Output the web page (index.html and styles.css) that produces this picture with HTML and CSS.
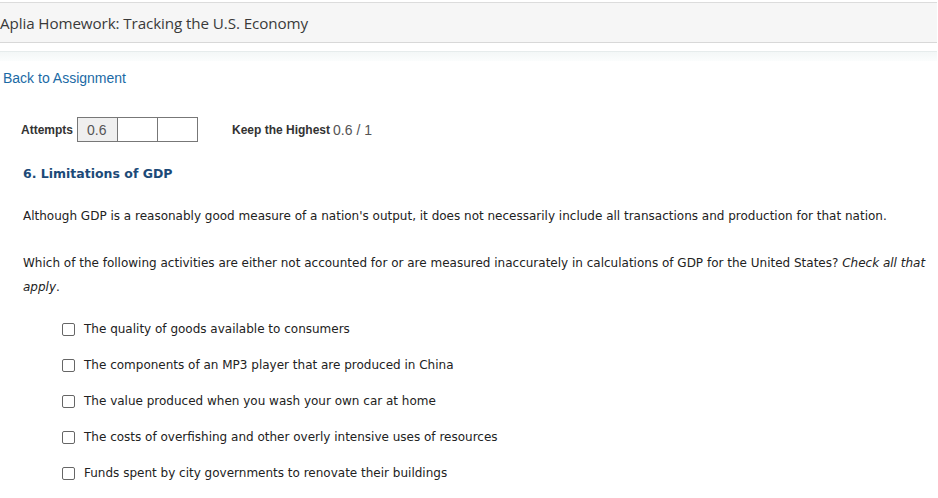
FILE: index.html
```html
<!DOCTYPE html>
<html>
<head>
<meta charset="utf-8">
<link rel="stylesheet" href="styles.css">
</head>
<body>
<div class="page">
  <header class="topbar">
    <h1 class="title">Aplia Homework: Tracking the U.S. Economy</h1>
  </header>
  <div class="subbar"></div>
  <nav class="backnav"><a class="back" href="#">Back to Assignment</a></nav>
  <section class="content">
    <div class="attempts-row">
      <span class="lbl">Attempts</span>
      <div class="boxes">
        <span class="box filled">0.6</span>
        <span class="box"></span>
        <span class="box"></span>
      </div>
      <span class="lbl keep">Keep the Highest</span>
      <span class="score">0.6 / 1</span>
    </div>
    <h2 class="qtitle">6. Limitations of GDP</h2>
    <p class="para">Although GDP is a reasonably good measure of a nation's output, it does not necessarily include all transactions and production for that nation.</p>
    <p class="para question">Which of the following activities are either not accounted for or are measured inaccurately in calculations of GDP for the United States? <em>Check all that</em> <em>apply</em>.</p>
    <ul class="options">
      <li class="opt"><span class="cb"></span><span>The quality of goods available to consumers</span></li>
      <li class="opt"><span class="cb"></span><span>The components of an MP3 player that are produced in China</span></li>
      <li class="opt"><span class="cb"></span><span>The value produced when you wash your own car at home</span></li>
      <li class="opt"><span class="cb"></span><span>The costs of overfishing and other overly intensive uses of resources</span></li>
      <li class="opt"><span class="cb"></span><span>Funds spent by city governments to renovate their buildings</span></li>
    </ul>
  </section>
</div>
</body>
</html>
```
FILE: styles.css
```css
html, body { margin: 0; padding: 0; background: #fff; }
body { width: 938px; height: 498px; overflow: hidden; }
.page { width: 937px; padding-top: 2px; }
.topbar {
  height: 39px;
  background: #f6f6f6;
  border-top: 1px solid #dcdcdc;
  border-bottom: 1px solid #d8d8d8;
  display: flex;
  align-items: center;
}
.title {
  margin: 0;
  font-family: "Open Sans", sans-serif;
  font-weight: 400;
  font-size: 15.2px;
  color: #3a3a3a;
  letter-spacing: -0.1px;
}
.subbar {
  margin-top: 8px;
  height: 9px;
  border-top: 1px solid #e6ecec;
  background: linear-gradient(#f3f7f7, #fbfdfd);
}
.backnav { padding: 8px 0 0 3px; height: 26px; }
.back {
  font-family: "Liberation Sans", Arial, sans-serif;
  font-size: 14px;
  color: #1b6aa5;
  text-decoration: none;
}
.content { padding-left: 21px; }
.attempts-row {
  display: flex;
  align-items: center;
  margin-top: 22px;
  height: 25px;
  font-family: "Liberation Sans", Arial, sans-serif;
}
.lbl { font-size: 12px; font-weight: bold; color: #333; }
.boxes { display: flex; margin-left: 4px; }
.box {
  height: 23px;
  border: 1px solid #777;
  margin-left: -1px;
  font-size: 14px; color: #555;
  display: flex; align-items: center; padding-left: 9px;
  width: 30px;
}
.box:first-child { margin-left: 0; }
.box.filled { background: #efefef; }
.keep { margin-left: 34px; }
.score { font-size: 14px; color: #555; margin-left: 3px; }
.qtitle {
  margin: 24px 0 0 2px;
  font-family: Verdana, "DejaVu Sans", sans-serif;
  font-size: 12.5px;
  font-weight: bold;
  color: #1c4a78;
}
.para {
  margin: 23px 0 0 2px;
  font-family: Verdana, "DejaVu Sans", sans-serif;
  font-size: 12px;
  line-height: 24px;
  color: #222;
}
.question { margin-top: 23px; }
.options { list-style: none; margin: 12px 0 0 0; padding: 0 0 0 41px; }
.opt {
  display: flex; align-items: center;
  height: 36px;
  font-family: Verdana, "DejaVu Sans", sans-serif;
  font-size: 12px; color: #222;
}
.cb {
  width: 11px; height: 11px;
  border: 1px solid #666;
  border-radius: 2px;
  margin-right: 9px;
}
```
